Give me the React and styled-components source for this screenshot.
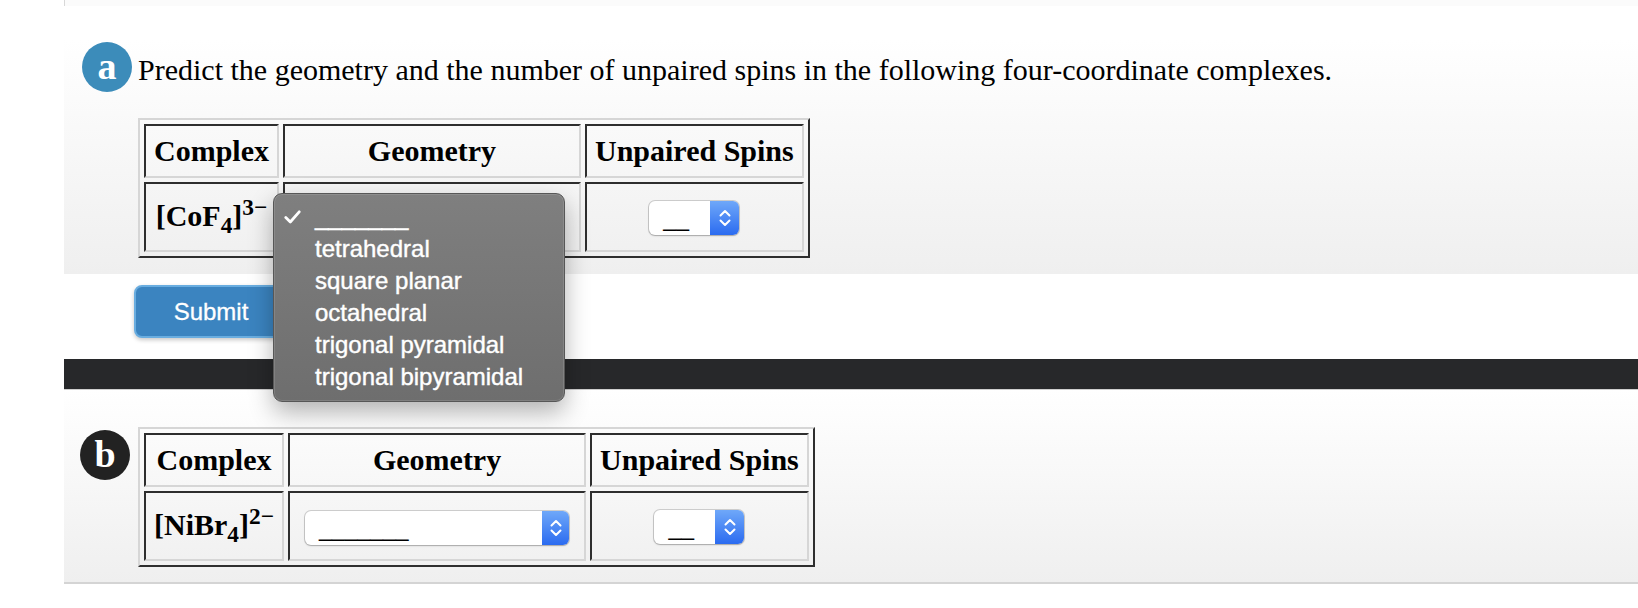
import React from "react";
import styled, { createGlobalStyle } from "styled-components";

const GlobalStyle = createGlobalStyle`
  html, body {
    margin: 0;
    padding: 0;
    background: #fff;
  }
  body {
    font-family: "Liberation Serif", "Times New Roman", serif;
    color: #000;
  }
`;

const Page = styled.div`
  width: 1638px;
  min-height: 608px;
  overflow: hidden;
`;

const TopStub = styled.div`
  margin-left: 64px;
  height: 6px;
  margin-bottom: 34px;
  border-left: 1px solid #d8d8d8;
  background: #fbfbfb;
`;

const Part = styled.section`
  margin-left: 64px;
  padding: ${(p) => p.$pad};
  background: linear-gradient(#ffffff, #efefef);
  ${(p) => p.$bottomLine && "border-bottom: 2px solid #d4d4d4;"}
`;

const Head = styled.div`
  display: flex;
  align-items: flex-start;
`;

const Row = styled.div`
  display: flex;
  align-items: flex-start;
`;

const Badge = styled.div`
  flex: none;
  width: 50px;
  height: 50px;
  margin-top: ${(p) => p.$offset || 0}px;
  border-radius: 50%;
  background: ${(p) => p.$tone};
  color: #fff;
  font: bold 38px/48px "Liberation Serif", "Times New Roman", serif;
  text-align: center;
`;

const Prompt = styled.p`
  margin: 11px 0 0 6px;
  font-size: 30px;
  line-height: 34px;
  white-space: nowrap;
`;

const DataTable = styled.table`
  margin-left: ${(p) => p.$left}px;
  margin-top: ${(p) => p.$top || 0}px;
  border-collapse: separate;
  border-spacing: 4px;
  border: 2px solid;
  border-color: #d6d6d6 #2e2e2e #2e2e2e #d6d6d6;
  font: bold 30px "Liberation Serif", "Times New Roman", serif;

  th,
  td {
    border: 2px solid;
    border-color: #2e2e2e #d6d6d6 #d6d6d6 #2e2e2e;
    padding: 8px;
    text-align: center;
    vertical-align: middle;
    white-space: nowrap;
  }

  td {
    padding: 10px 8px 11px;
  }

  sub,
  sup {
    font-size: 0.78em;
  }
`;

const GeoHead = styled.th`
  width: 278px;
`;

const Anchor = styled.span`
  position: relative;
  display: inline-block;
  vertical-align: middle;
`;

const SelectBox = styled.span`
  display: inline-flex;
  vertical-align: middle;
  width: ${(p) => p.$width}px;
  height: 34px;
  border-radius: 6px;
  overflow: hidden;
  background: #fff;
  box-shadow: 0 0 0 1px rgba(0, 0, 0, 0.16), 0 1px 2px rgba(0, 0, 0, 0.18);
`;

const SelectText = styled.span`
  flex: 1;
  padding-left: 14px;
  font: 23px/34px "Liberation Sans", Arial, sans-serif;
  font-weight: normal;
  text-align: left;
  color: #000;
`;

const SelectArrow = styled.span`
  flex: none;
  width: ${(p) => p.$arrow}px;
  display: flex;
  align-items: center;
  justify-content: center;
  background: linear-gradient(#6fa8f9, #2b6bf0);
`;

const Popup = styled.ul`
  position: absolute;
  left: -27px;
  top: -6px;
  z-index: 10;
  width: 292px;
  box-sizing: border-box;
  margin: 0;
  padding: 7px 0 8px;
  list-style: none;
  border: 1px solid #575757;
  border-radius: 9px;
  background: linear-gradient(#7f7f7f, #6e6e6e);
  box-shadow: inset 0 0 0 1px rgba(255, 255, 255, 0.12),
    0 10px 24px rgba(0, 0, 0, 0.3);
  font: 24px/32px "Liberation Sans", Arial, sans-serif;
  font-weight: normal;
  -webkit-text-stroke: 0.4px #fff;
  color: #fff;
  text-align: left;
  white-space: nowrap;
`;

const Option = styled.li`
  display: flex;
  align-items: center;
  height: 32px;
  padding-left: 10px;
`;

const CheckSlot = styled.span`
  flex: none;
  width: 31px;
  display: flex;
  align-items: center;
`;

const SubmitRow = styled.div`
  margin-left: 64px;
  padding: 11px 0 21px 70px;
`;

const SubmitButton = styled.button`
  width: 154px;
  height: 53px;
  border: 2px solid #69ade0;
  border-radius: 8px;
  background: #3b84c0;
  color: #fff;
  font: 24px "Liberation Sans", Arial, sans-serif;
  -webkit-text-stroke: 0.3px #fff;
  box-shadow: 0 2px 4px rgba(0, 0, 0, 0.22);
  cursor: pointer;
`;

const DarkBar = styled.div`
  margin-left: 64px;
  height: 30px;
  background: #27282a;
  border-bottom: 1px solid #cfcfcf;
`;

const Chevrons = () => (
  <svg width="14" height="22" viewBox="0 0 14 22" fill="none">
    <path d="M2.5 8.5 L7 4 L11.5 8.5" stroke="#fff" strokeWidth="2" strokeLinecap="round" strokeLinejoin="round" />
    <path d="M2.5 13.5 L7 18 L11.5 13.5" stroke="#fff" strokeWidth="2" strokeLinecap="round" strokeLinejoin="round" />
  </svg>
);

const Check = () => (
  <svg width="17" height="14" viewBox="0 0 17 14" fill="none">
    <path d="M1.8 7.5 L6.3 12 L15.2 1.8" stroke="#fff" strokeWidth="2.8" strokeLinecap="round" strokeLinejoin="round" />
  </svg>
);

const Select = ({ width, arrow, value }) => (
  <SelectBox $width={width}>
    <SelectText>{value}</SelectText>
    <SelectArrow $arrow={arrow}>
      <Chevrons />
    </SelectArrow>
  </SelectBox>
);

const options = [
  "_______",
  "tetrahedral",
  "square planar",
  "octahedral",
  "trigonal pyramidal",
  "trigonal bipyramidal",
];

const GeometryMenu = () => (
  <Popup>
    {options.map((o, i) => (
      <Option key={o}>
        <CheckSlot>{i === 0 && <Check />}</CheckSlot>
        {o}
      </Option>
    ))}
  </Popup>
);

const ComplexTable = ({ formula, left, top, open }) => (
  <DataTable $left={left} $top={top}>
    <tbody>
      <tr>
        <th>Complex</th>
        <GeoHead>Geometry</GeoHead>
        <th>Unpaired Spins</th>
      </tr>
      <tr>
        <td>{formula}</td>
        <td>
          <Anchor>
            <Select width={264} arrow={27} value="_______" />
            {open && <GeometryMenu />}
          </Anchor>
        </td>
        <td>
          <Select width={90} arrow={29} value="__" />
        </td>
      </tr>
    </tbody>
  </DataTable>
);

export default function App() {
  return (
    <Page>
      <GlobalStyle />
      <TopStub />
      <Part $pad="2px 0 16px 18px">
        <Head>
          <Badge $tone="#3c8cba">a</Badge>
          <Prompt>
            Predict the geometry and the number of unpaired spins in the following four-coordinate complexes.
          </Prompt>
        </Head>
        <ComplexTable
          left={56}
          top={26}
          open
          formula={
            <>
              [CoF<sub>4</sub>]<sup>3−</sup>
            </>
          }
        />
      </Part>
      <SubmitRow>
        <SubmitButton>Submit</SubmitButton>
      </SubmitRow>
      <DarkBar />
      <Part $pad="37px 0 15px 16px" $bottomLine>
        <Row>
          <Badge $tone="#222222" $offset={3}>b</Badge>
          <ComplexTable
            left={8}
            formula={
              <>
                [NiBr<sub>4</sub>]<sup>2−</sup>
              </>
            }
          />
        </Row>
      </Part>
    </Page>
  );
}
